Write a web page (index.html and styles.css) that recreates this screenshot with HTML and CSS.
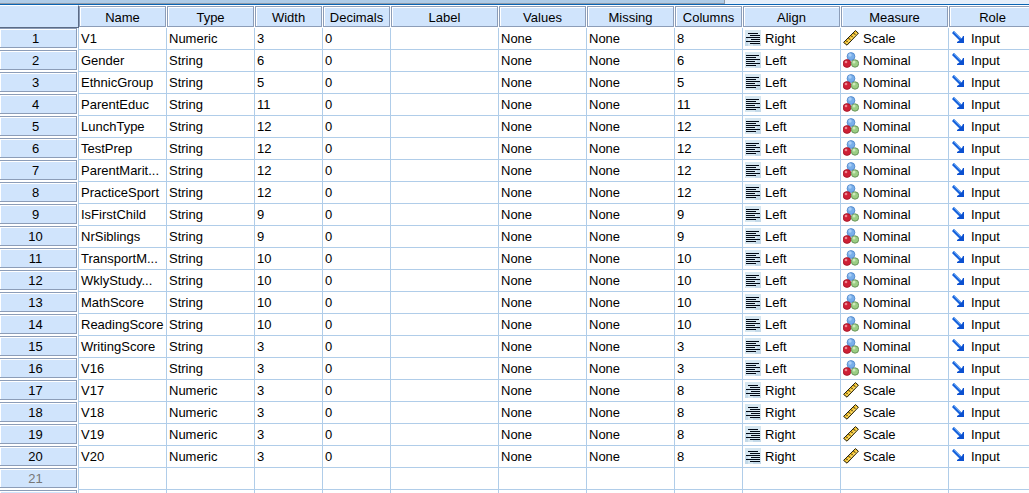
FILE: index.html
```html
<!DOCTYPE html>
<html lang="en">
<head>
  <meta charset="UTF-8">
  <meta name="viewport" content="width=device-width, initial-scale=1.0">
  <title>Variable View</title>
  <link rel="stylesheet" href="styles.css">
</head>
<body>
  <svg class="sprite" aria-hidden="true">
    <symbol id="icon-right" viewBox="0 0 16 16">
      <path fill="#d6e7f1" d="M0 0h16v16H0z"/>
      <path fill="#c3d9e8" d="M8 13h8v3H8zM0 8h3v8H0z"/>
      <path stroke="#000814" stroke-width="1.2" d="M3 3.5h10M5 5.5h10M1 7.5h14M6 9.5h9M1 11.5h14M5 13.5h10"/>
    </symbol>
    <symbol id="icon-left" viewBox="0 0 16 16">
      <path fill="#d6e7f1" d="M0 0h16v16H0z"/>
      <path fill="#c3d9e8" d="M10 13h6v3h-6zM12 8h4v8h-4z"/>
      <path stroke="#000814" stroke-width="1.2" d="M1 3.5h13M1 5.5h10M1 7.5h14M1 9.5h9M1 11.5h14M1 13.5h10"/>
    </symbol>
    <symbol id="icon-scale" viewBox="0 0 16 16">
      <path fill="#f5c433" stroke="#24210f" d="M.6 12.4L12.400 .6l3 2.600L4 15.200z"/>
      <path stroke="#ffe98a" d="M3.500 13.500L14 3.300"/>
      <path stroke="#24210f" d="M3 10.500l1.800 1.800M5.500 8l1.800 1.800M8 5.500l1.800 1.800M10.500 3l1.800 1.800"/>
    </symbol>
    <symbol id="icon-nominal" viewBox="0 0 16 16">
      <circle cx="8" cy="4.5" r="3.9" fill="#78aeea" stroke="#4a82c6" stroke-width=".8"/>
      <circle cx="7" cy="3" r="1.7" fill="#a9cff7"/>
      <circle cx="4" cy="11.5" r="3.9" fill="#ce2036" stroke="#a11527" stroke-width=".8"/>
      <circle cx="3" cy="10" r="1.3" fill="#ee8791"/>
      <circle cx="12" cy="11.5" r="3.7" fill="#9bce83" stroke="#57844b" stroke-width=".8"/>
      <circle cx="11" cy="10" r="1.5" fill="#cdeabb"/>
    </symbol>
    <symbol id="icon-input" viewBox="0 0 16 16">
      <path stroke="#1560dc" stroke-width="3" d="M2 2l8 8"/>
      <path fill="#0b50d0" d="M13 6v7H6v-1l3-2 2-2 1-2z"/>
      <path stroke="#5aa0f2" d="M2 1l7.500 7.500"/>
    </symbol>
  </svg>

  <div class="scroll-track"><div class="scroll-thumb"></div></div>

  <table class="grid">
    <colgroup>
      <col class="w-num">
      <col class="w-md">
      <col class="w-md">
      <col class="w-sm">
      <col class="w-sm">
      <col class="w-lg">
      <col class="w-md">
      <col class="w-md">
      <col class="w-sm">
      <col class="w-align">
      <col class="w-lg">
      <col class="w-md">
    </colgroup>
    <thead>
      <tr>
        <td class="corner"></td>
        <th scope="col"><div class="head">Name</div></th>
        <th scope="col"><div class="head">Type</div></th>
        <th scope="col"><div class="head">Width</div></th>
        <th scope="col"><div class="head">Decimals</div></th>
        <th scope="col"><div class="head">Label</div></th>
        <th scope="col"><div class="head">Values</div></th>
        <th scope="col"><div class="head">Missing</div></th>
        <th scope="col"><div class="head">Columns</div></th>
        <th scope="col"><div class="head">Align</div></th>
        <th scope="col"><div class="head">Measure</div></th>
        <th scope="col"><div class="head">Role</div></th>
      </tr>
    </thead>
    <tbody id="variables"></tbody>
  </table>

  <script>
    // name, type, width, columns
    const variables = [
      ['V1', 'Numeric', 3, 8],
      ['Gender', 'String', 6, 6],
      ['EthnicGroup', 'String', 5, 5],
      ['ParentEduc', 'String', 11, 11],
      ['LunchType', 'String', 12, 12],
      ['TestPrep', 'String', 12, 12],
      ['ParentMarit...', 'String', 12, 12],
      ['PracticeSport', 'String', 12, 12],
      ['IsFirstChild', 'String', 9, 9],
      ['NrSiblings', 'String', 9, 9],
      ['TransportM...', 'String', 10, 10],
      ['WklyStudy...', 'String', 10, 10],
      ['MathScore', 'String', 10, 10],
      ['ReadingScore', 'String', 10, 10],
      ['WritingScore', 'String', 3, 3],
      ['V16', 'String', 3, 3],
      ['V17', 'Numeric', 3, 8],
      ['V18', 'Numeric', 3, 8],
      ['V19', 'Numeric', 3, 8],
      ['V20', 'Numeric', 3, 8]
    ];

    function iconCell(icon, text) {
      return `<div class="with-icon"><svg class="icon"><use href="#icon-${icon}"/></svg><span>${text}</span></div>`;
    }

    function row(number, cells, cls) {
      const tds = cells.map(c => `<td>${c}</td>`).join('');
      return `<tr><th scope="row"><div class="row-head ${cls}">${number}</div></th>${tds}</tr>`;
    }

    let html = '';
    variables.forEach(([name, type, width, columns], i) => {
      const numeric = type === 'Numeric';
      html += row(i + 1, [
        name, type, width, 0, '', 'None', 'None', columns,
        numeric ? iconCell('right', 'Right') : iconCell('left', 'Left'),
        numeric ? iconCell('scale', 'Scale') : iconCell('nominal', 'Nominal'),
        iconCell('input', 'Input')
      ], '');
    });

    // empty rows below the last variable
    html += row(21, Array(11).fill(''), 'unused');
    html += row('', Array(11).fill(''), 'unused');
    document.getElementById('variables').innerHTML = html;
  </script>
</body>
</html>
```
FILE: styles.css
```css
* {
  margin: 0;
  padding: 0;
  box-sizing: border-box;
}

html {
  height: 100%;
  overflow: hidden;
}

body {
  height: 100%;
  overflow: hidden;
  background: white;
  color: #000;
  font-family: "Liberation Sans", Arial, sans-serif;
  font-size: 13px;
  line-height: 18px;
}

.sprite {
  display: none;
}

.scroll-track {
  height: 5px;
  background: #e4eefa;
  border-bottom: 1px solid #0a64b4;
}

.scroll-thumb {
  width: 70.5%;
  height: 4px;
  background: #afcce8;
  border-right: 1px solid #8f9aa8;
  border-bottom: 1px solid #8f9aa8;
}

.grid {
  width: 1037px;
  table-layout: fixed;
  border-collapse: separate;
  border-spacing: 0;
}

.w-num { width: 79px; }
.w-sm { width: 68px; }
.w-md { width: 88px; }
.w-lg { width: 108px; }
.w-align { width: 98px; }

th {
  font-weight: normal;
}

thead th {
  height: 23px;
  padding: 1px 1px 1px 0;
}

.corner {
  background: #d0e4fc;
  border-top: 1px solid white;
  border-right: 1px solid #5b6b85;
  border-bottom: 1px solid #5b6b85;
}

.head,
.row-head {
  background: #d0e4fc;
  border: 1px solid #8c9db8;
  box-shadow: inset 1px 1px white;
  text-align: center;
}

.head {
  height: 21px;
  padding-top: 2px;
}

tbody th {
  height: 22px;
  padding-right: 1px;
  border-right: 1px solid #b0cde9;
  vertical-align: top;
}

.row-head {
  height: 20px;
  padding: 1px 5px 0 0;
  border-left: none;
}

.unused {
  color: #777;
}

tbody td {
  height: 22px;
  padding: 2px 0 0 2px;
  border-right: 1px solid #b0cde9;
  border-bottom: 1px solid #b0cde9;
  vertical-align: top;
  white-space: nowrap;
}

.with-icon {
  display: flex;
  align-items: flex-start;
  gap: 4px;
}

.icon {
  width: 16px;
  height: 16px;
  flex: none;
  fill: none;
}
```
